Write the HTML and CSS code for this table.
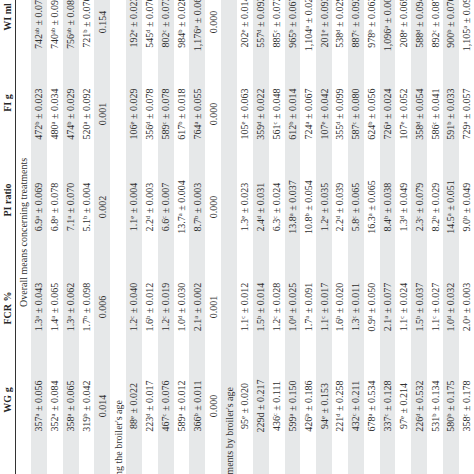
FILE: index.html
```html
<!DOCTYPE html>
<html>
<head>
<meta charset="utf-8">
<link rel="stylesheet" href="styles.css">
</head>
<body>
<div class="viewport">
  <div class="sheet">
    <div class="row head">
      <div class="c h-wg">WG g</div>
      <div class="c h-fcr">FCR %</div>
      <div class="c h-pi">PI ratio</div>
      <div class="c h-fi">FI g</div>
      <div class="c h-wi">WI ml</div>
    </div>
    <div class="tbody">
      <div class="row sec"><span class="sec-center">Overall means concerning treatments</span></div>
      <div class="row"><div class="c">357<sup>a</sup> ± 0.056</div><div class="c">1.3<sup>a</sup> ± 0.043</div><div class="c">6.9<sup>a</sup> ± 0.069</div><div class="c">472<sup>b</sup> ± 0.023</div><div class="c">742<sup>ab</sup> ± 0.071</div></div>
      <div class="row"><div class="c">352<sup>a</sup> ± 0.084</div><div class="c">1.4<sup>a</sup> ± 0.065</div><div class="c">6.8<sup>a</sup> ± 0.078</div><div class="c">480<sup>a</sup> ± 0.034</div><div class="c">740<sup>ab</sup> ± 0.093</div></div>
      <div class="row"><div class="c">358<sup>a</sup> ± 0.065</div><div class="c">1.3<sup>a</sup> ± 0.062</div><div class="c">7.1<sup>a</sup> ± 0.070</div><div class="c">474<sup>b</sup> ± 0.029</div><div class="c">756<sup>ab</sup> ± 0.082</div></div>
      <div class="row"><div class="c">319<sup>b</sup> ± 0.042</div><div class="c">1.7<sup>b</sup> ± 0.098</div><div class="c">5.1<sup>b</sup> ± 0.004</div><div class="c">520<sup>a</sup> ± 0.092</div><div class="c">721<sup>b</sup> ± 0.076</div></div>
      <div class="row"><div class="c">0.014</div><div class="c">0.006</div><div class="c">0.002</div><div class="c">0.001</div><div class="c">0.154</div></div>
      <div class="row sec"><div class="lab lab-age">Overall means concerning the broiler's age</div></div>
      <div class="row"><div class="c">88<sup>e</sup> ± 0.022</div><div class="c">1.2<sup>c</sup> ± 0.040</div><div class="c">1.1<sup>e</sup> ± 0.004</div><div class="c">106<sup>e</sup> ± 0.029</div><div class="c">192<sup>e</sup> ± 0.023</div></div>
      <div class="row"><div class="c">223<sup>d</sup> ± 0.017</div><div class="c">1.6<sup>b</sup> ± 0.012</div><div class="c">2.2<sup>d</sup> ± 0.003</div><div class="c">356<sup>d</sup> ± 0.078</div><div class="c">545<sup>d</sup> ± 0.076</div></div>
      <div class="row"><div class="c">467<sup>c</sup> ± 0.076</div><div class="c">1.2<sup>c</sup> ± 0.019</div><div class="c">6.6<sup>c</sup> ± 0.007</div><div class="c">589<sup>c</sup> ± 0.078</div><div class="c">802<sup>c</sup> ± 0.073</div></div>
      <div class="row"><div class="c">589<sup>a</sup> ± 0.012</div><div class="c">1.0<sup>d</sup> ± 0.030</div><div class="c">13.7<sup>a</sup> ± 0.004</div><div class="c">617<sup>b</sup> ± 0.018</div><div class="c">984<sup>b</sup> ± 0.028</div></div>
      <div class="row"><div class="c">366<sup>b</sup> ± 0.011</div><div class="c">2.1<sup>a</sup> ± 0.002</div><div class="c">8.7<sup>b</sup> ± 0.003</div><div class="c">764<sup>a</sup> ± 0.055</div><div class="c">1,176<sup>a</sup> ± 0.067</div></div>
      <div class="row"><div class="c">0.000</div><div class="c">0.001</div><div class="c">0.000</div><div class="c">0.000</div><div class="c">0.000</div></div>
      <div class="row sec"><div class="lab lab-int">Interaction of treatments by broiler's age</div></div>
      <div class="row"><div class="c">95<sup>e</sup> ± 0.020</div><div class="c">1.1<sup>c</sup> ± 0.012</div><div class="c">1.3<sup>e</sup> ± 0.023</div><div class="c">105<sup>e</sup> ± 0.063</div><div class="c">202<sup>e</sup> ± 0.014</div></div>
      <div class="row"><div class="c">229d ± 0.217</div><div class="c">1.5<sup>b</sup> ± 0.014</div><div class="c">2.4<sup>d</sup> ± 0.031</div><div class="c">359<sup>d</sup> ± 0.022</div><div class="c">557<sup>d</sup> ± 0.092</div></div>
      <div class="row"><div class="c">436<sup>c</sup> ± 0.111</div><div class="c">1.2<sup>c</sup> ± 0.028</div><div class="c">6.3<sup>c</sup> ± 0.024</div><div class="c">561<sup>c</sup> ± 0.048</div><div class="c">885<sup>c</sup> ± 0.072</div></div>
      <div class="row"><div class="c">599<sup>a</sup> ± 0.150</div><div class="c">1.0<sup>d</sup> ± 0.025</div><div class="c">13.8<sup>a</sup> ± 0.037</div><div class="c">612<sup>b</sup> ± 0.014</div><div class="c">965<sup>b</sup> ± 0.067</div></div>
      <div class="row"><div class="c">426<sup>b</sup> ± 0.186</div><div class="c">1.7<sup>a</sup> ± 0.091</div><div class="c">10.8<sup>b</sup> ± 0.054</div><div class="c">724<sup>a</sup> ± 0.067</div><div class="c">1,104<sup>a</sup> ± 0.024</div></div>
      <div class="row"><div class="c">94<sup>e</sup> ± 0.153</div><div class="c">1.1<sup>c</sup> ± 0.017</div><div class="c">1.2<sup>e</sup> ± 0.035</div><div class="c">107<sup>e</sup> ± 0.042</div><div class="c">201<sup>e</sup> ± 0.093</div></div>
      <div class="row"><div class="c">221<sup>d</sup> ± 0.258</div><div class="c">1.6<sup>b</sup> ± 0.020</div><div class="c">2.2<sup>d</sup> ± 0.039</div><div class="c">355<sup>d</sup> ± 0.099</div><div class="c">538<sup>d</sup> ± 0.029</div></div>
      <div class="row"><div class="c">432<sup>c</sup> ± 0.211</div><div class="c">1.3<sup>c</sup> ± 0.011</div><div class="c">5.8<sup>c</sup> ± 0.065</div><div class="c">587<sup>c</sup> ± 0.080</div><div class="c">887<sup>c</sup> ± 0.092</div></div>
      <div class="row"><div class="c">678<sup>a</sup> ± 0.534</div><div class="c">0.9<sup>d</sup> ± 0.050</div><div class="c">16.3<sup>a</sup> ± 0.065</div><div class="c">624<sup>b</sup> ± 0.056</div><div class="c">978<sup>b</sup> ± 0.062</div></div>
      <div class="row"><div class="c">337<sup>c</sup> ± 0.128</div><div class="c">2.1<sup>a</sup> ± 0.077</div><div class="c">8.4<sup>b</sup> ± 0.038</div><div class="c">726<sup>a</sup> ± 0.024</div><div class="c">1,096<sup>a</sup> ± 0.008</div></div>
      <div class="row"><div class="c">97<sup>e</sup> ± 0.214</div><div class="c">1.1<sup>c</sup> ± 0.024</div><div class="c">1.3<sup>d</sup> ± 0.049</div><div class="c">107<sup>e</sup> ± 0.052</div><div class="c">208<sup>e</sup> ± 0.065</div></div>
      <div class="row"><div class="c">226<sup>d</sup> ± 0.532</div><div class="c">1.5<sup>b</sup> ± 0.037</div><div class="c">2.3<sup>c</sup> ± 0.079</div><div class="c">358<sup>d</sup> ± 0.054</div><div class="c">588<sup>d</sup> ± 0.094</div></div>
      <div class="row"><div class="c">531<sup>b</sup> ± 0.134</div><div class="c">1.1<sup>c</sup> ± 0.027</div><div class="c">8.2<sup>b</sup> ± 0.029</div><div class="c">586<sup>c</sup> ± 0.041</div><div class="c">892<sup>c</sup> ± 0.087</div></div>
      <div class="row"><div class="c">580<sup>b</sup> ± 0.175</div><div class="c">1.0<sup>d</sup> ± 0.032</div><div class="c">14.5<sup>a</sup> ± 0.051</div><div class="c">591<sup>b</sup> ± 0.033</div><div class="c">900<sup>b</sup> ± 0.076</div></div>
      <div class="row"><div class="c">358<sup>c</sup> ± 0.178</div><div class="c">2.0<sup>a</sup> ± 0.003</div><div class="c">9.0<sup>b</sup> ± 0.049</div><div class="c">729<sup>a</sup> ± 0.057</div><div class="c">1,105<sup>a</sup> ± 0.093</div></div>
    </div>
  </div>
</div>
</body>
</html>
```
FILE: styles.css
```css
html, body {
  margin: 0;
  padding: 0;
  background: #ffffff;
}

.viewport {
  width: 474px;
  height: 474px;
  overflow: hidden;
  position: relative;
  background: #ffffff;
}

.sheet {
  width: 530px;
  transform-origin: 0 0;
  transform: translateY(474px) rotate(-90deg);
  font-family: "Liberation Serif", "Times New Roman", serif;
  font-size: 10px;
  color: #2f2f2f;
}

.row {
  display: grid;
  grid-template-columns: 100px 98px 102px 84px 100px;
  padding-left: 18px;
  height: 15.85px;
  align-items: center;
  line-height: 15px;
}

.c {
  text-align: center;
  white-space: nowrap;
}

sup {
  font-size: 6.5px;
  line-height: 0;
  vertical-align: 3px;
}

.head {
  height: 15px;
  border-bottom: 1px solid #333333;
  font-weight: bold;
  color: #262626;
}

.h-wg { padding-left: 12px; }
.h-fcr { padding-right: 2px; }
.h-pi { padding-left: 14px; }
.h-fi { padding-left: 22px; }
.h-wi { padding-left: 10px; }

.tbody .row:nth-child(even) {
  background: #e6e8e9;
}

.tbody .row.sec:first-child {
  height: 15px;
}

.sec {
  display: flex;
  padding-left: 0;
}

.sec-center {
  padding-left: 167px;
  white-space: nowrap;
}

.lab {
  display: flex;
  justify-content: flex-end;
  white-space: nowrap;
}

.lab-age { width: 74px; }
.lab-int { width: 87px; }
```
